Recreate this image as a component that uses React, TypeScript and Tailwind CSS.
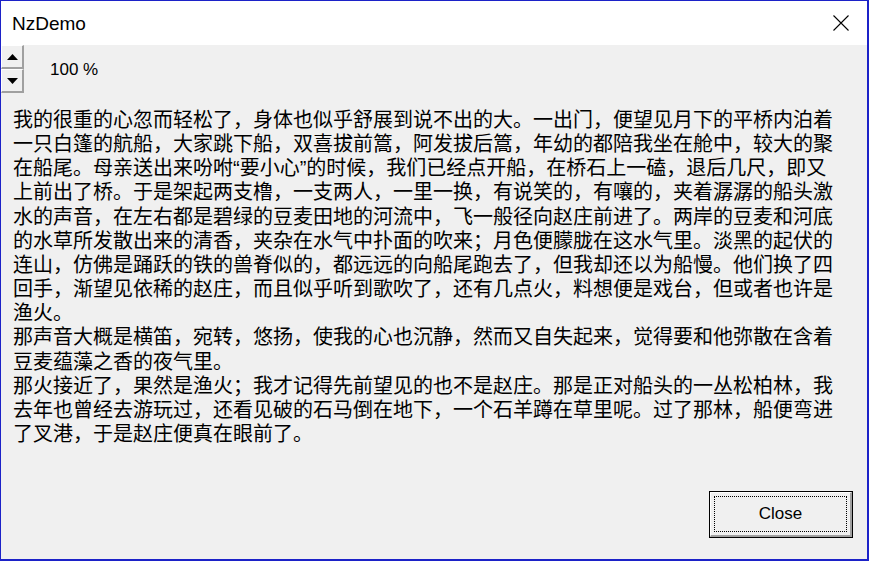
const lines = [
  "我的很重的心忽而轻松了，身体也似乎舒展到说不出的大。一出门，便望见月下的平桥内泊着",
  "一只白篷的航船，大家跳下船，双喜拔前篙，阿发拔后篙，年幼的都陪我坐在舱中，较大的聚",
  "在船尾。母亲送出来吩咐“要小心”的时候，我们已经点开船，在桥石上一磕，退后几尺，即又",
  "上前出了桥。于是架起两支橹，一支两人，一里一换，有说笑的，有嚷的，夹着潺潺的船头激",
  "水的声音，在左右都是碧绿的豆麦田地的河流中，飞一般径向赵庄前进了。两岸的豆麦和河底",
  "的水草所发散出来的清香，夹杂在水气中扑面的吹来；月色便朦胧在这水气里。淡黑的起伏的",
  "连山，仿佛是踊跃的铁的兽脊似的，都远远的向船尾跑去了，但我却还以为船慢。他们换了四",
  "回手，渐望见依稀的赵庄，而且似乎听到歌吹了，还有几点火，料想便是戏台，但或者也许是",
  "渔火。",
  "那声音大概是横笛，宛转，悠扬，使我的心也沉静，然而又自失起来，觉得要和他弥散在含着",
  "豆麦蕴藻之香的夜气里。",
  "那火接近了，果然是渔火；我才记得先前望见的也不是赵庄。那是正对船头的一丛松柏林，我",
  "去年也曾经去游玩过，还看见破的石马倒在地下，一个石羊蹲在草里呢。过了那林，船便弯进",
  "了叉港，于是赵庄便真在眼前了。",
];

const SpinButton = ({ up }: { up?: boolean }) => (
  <div className="w-[23px] min-w-[23px] h-[24px] bg-[#f0f0f0] border-t border-l border-t-white border-l-white border-r-2 border-b-2 border-r-[#a0a0a0] border-b-[#a0a0a0] flex items-center justify-center shrink-0">
    <svg width="11" height="6" viewBox="0 0 11 6" className="shrink-0">
      {up ? <polygon points="0,6 11,6 5.5,0" fill="#000" /> : <polygon points="0,0 11,0 5.5,6" fill="#000" />}
    </svg>
  </div>
);

const App = () => {
  return (
    <div className="w-[869px] h-[561px] bg-[#f0f0f0] border border-[#1c22c8] border-r-2 border-b-2 flex flex-col font-['Liberation_Sans','Noto_Sans_CJK_SC',sans-serif] text-black">
      {/* title bar */}
      <div className="h-[44px] bg-white flex items-center justify-between pl-[11px] pr-[18px] shrink-0">
        <span className="text-[19px] leading-none">NzDemo</span>
        <svg width="16" height="16" viewBox="0 0 16 16">
          <path d="M0.5 0.5 L15.5 15.5 M15.5 0.5 L0.5 15.5" stroke="#000" strokeWidth="1.1" fill="none" />
        </svg>
      </div>

      {/* zoom spinner */}
      <div className="flex items-center shrink-0 h-[48px]">
        <div className="flex flex-col w-[23px] shrink-0">
          <SpinButton up />
          <SpinButton />
        </div>
        <span className="ml-[26px] text-[17px] leading-none">100 %</span>
      </div>

      {/* text */}
      <div className="mt-[15px] pl-[12px] text-[20px] leading-[24.15px] whitespace-nowrap">
        {lines.map((l, i) => (
          <div key={i}>{l}</div>
        ))}
      </div>

      <div className="flex-1" />

      <div className="flex justify-end pr-[14px] pb-[21px] shrink-0">
        <button className="w-[144px] h-[47px] border border-black bg-[#f0f0f0] p-0">
          <div className="h-full border-t border-l border-t-white border-l-white border-r-2 border-b-2 border-r-[#a0a0a0] border-b-[#a0a0a0] p-[3px]">
            <div className="h-full border border-dotted border-black flex items-center justify-center text-[17px]">
              Close
            </div>
          </div>
        </button>
      </div>
    </div>
  );
};

export default App;
